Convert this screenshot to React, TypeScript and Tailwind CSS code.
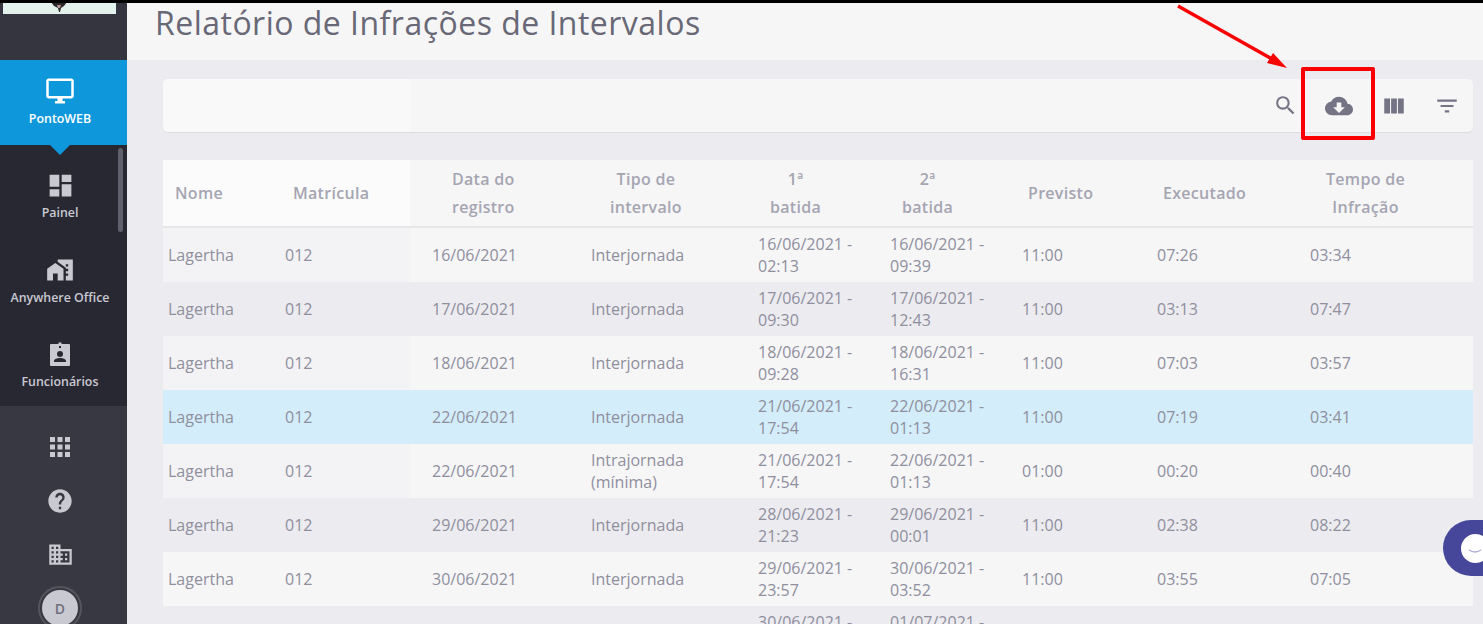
import { MdOutlineDesktopWindows, MdDashboard, MdHomeWork, MdApps, MdHelp, MdDomain, MdSearch, MdCloudDownload, MdViewColumn, MdFilterList } from "react-icons/md";

type Row = { d: string; t: string[]; a: string[]; b: string[]; p: string; e: string; i: string; bg: string; left: string };
const L = "bg-[#f6f6f7]";
const LL = "bg-[#f3f3f5]";
const D = "bg-[#ecebef]";
const H = "bg-[#d3edfa]";
const rows: Row[] = [
  { d: "16/06/2021", t: ["Interjornada"], a: ["16/06/2021 -", "02:13"], b: ["16/06/2021 -", "09:39"], p: "11:00", e: "07:26", i: "03:34", bg: L, left: LL },
  { d: "17/06/2021", t: ["Interjornada"], a: ["17/06/2021 -", "09:30"], b: ["17/06/2021 -", "12:43"], p: "11:00", e: "03:13", i: "07:47", bg: D, left: D },
  { d: "18/06/2021", t: ["Interjornada"], a: ["18/06/2021 -", "09:28"], b: ["18/06/2021 -", "16:31"], p: "11:00", e: "07:03", i: "03:57", bg: L, left: LL },
  { d: "22/06/2021", t: ["Interjornada"], a: ["21/06/2021 -", "17:54"], b: ["22/06/2021 -", "01:13"], p: "11:00", e: "07:19", i: "03:41", bg: H, left: H },
  { d: "22/06/2021", t: ["Intrajornada", "(mínima)"], a: ["21/06/2021 -", "17:54"], b: ["22/06/2021 -", "01:13"], p: "01:00", e: "00:20", i: "00:40", bg: L, left: LL },
  { d: "29/06/2021", t: ["Interjornada"], a: ["28/06/2021 -", "21:23"], b: ["29/06/2021 -", "00:01"], p: "11:00", e: "02:38", i: "08:22", bg: D, left: D },
  { d: "30/06/2021", t: ["Interjornada"], a: ["29/06/2021 -", "23:57"], b: ["30/06/2021 -", "03:52"], p: "11:00", e: "03:55", i: "07:05", bg: L, left: L },
  { d: "01/07/2021", t: ["Interjornada"], a: ["30/06/2021 -", "23:30"], b: ["01/07/2021 -", "05:10"], p: "11:00", e: "05:40", i: "05:20", bg: D, left: D },
];

const widths = ["w-[117px]", "w-[130px]", "w-[176px]", "w-[167px]", "w-[132px]", "w-[132px]", "w-[135px]", "w-[153px]", "w-[168px]"];

function Lines({ l }: { l: string[] }) {
  return <>{l.map((x) => <div key={x}>{x}</div>)}</>;
}

function Nav({ icon, label }: { icon: React.ReactNode; label: string }) {
  return (
    <div className="flex h-[84.5px] flex-col items-center pr-[7px] pt-[25px] text-[12.4px] font-semibold text-[#c9c9d2]">
      <div className="flex h-[30px] items-center justify-center">{icon}</div>
      <span className="mt-[5px] whitespace-nowrap leading-[16px]">{label}</span>
    </div>
  );
}

function Badge() {
  return (
    <svg width="22" height="26" viewBox="0 0 22 26" className="text-[#c9c9d2]">
      <path
        fillRule="evenodd"
        fill="currentColor"
        d="M2 3h7.5V1.5h3V3H20a1 1 0 0 1 1 1v20a1 1 0 0 1-1 1H2a1 1 0 0 1-1-1V4a1 1 0 0 1 1-1zM10 5v2h2V5zM11 10a3 3 0 1 0 0 6 3 3 0 0 0 0-6zM5 21h12v-1c0-2-3-3-6-3s-6 1-6 3z"
      />
    </svg>
  );
}

function Th({ l, pad, cls }: { l: string[]; pad: string; cls: string }) {
  return (
    <th className={`${pad} ${cls} pb-[2px] text-left align-middle font-semibold shadow-[inset_0_-2px_0_#e6e6e9]`}>
      <div className="inline-block text-center">
        <Lines l={l} />
      </div>
    </th>
  );
}

export default function App() {
  return (
    <div className="relative flex h-[624px] w-[1483px] overflow-hidden bg-[#ecebef] font-['Open_Sans',sans-serif]">
      <div className="absolute inset-x-0 top-0 z-20 h-[3px] bg-black" />

      <aside className="flex h-full w-[127px] shrink-0 flex-col bg-[#383842]">
        <div className="h-[60px] shrink-0 bg-[#35353f] px-[3px]">
          <div className="h-[14px] w-[113px] bg-[#e4f2ee] pl-[48px]">
            <svg width="16" height="14" viewBox="0 0 16 14">
              <path d="M0 2h16l-3 4-3 2-1 4H8L7 8 3 6z" fill="#2a2526" />
              <path d="M6 5h4l-1 3H7z" fill="#b99" />
            </svg>
          </div>
        </div>
        <div className="relative z-10 flex h-[85px] shrink-0 flex-col items-center bg-[#0f97db] pr-[7px] pt-[16px] text-[12.4px] font-semibold text-white">
          <div className="flex h-[30px] items-center justify-center"><MdOutlineDesktopWindows size={30} /></div>
          <span className="mt-[5px] leading-[16px]">PontoWEB</span>
          <div className="absolute left-[50px] top-full h-0 w-0 border-x-[10px] border-t-[10px] border-x-transparent border-t-[#0f97db]" />
        </div>
        <div className="relative h-[261px] shrink-0 bg-[#282832]">
          <div className="absolute right-[4px] top-[3px] h-[84px] w-[5px] rounded-full bg-[#5f5f6e]" />
          <Nav icon={<MdDashboard size={29} />} label="Painel" />
          <Nav icon={<MdHomeWork size={28} />} label="Anywhere Office" />
          <Nav icon={<Badge />} label="Funcionários" />
        </div>
        <div className="flex flex-col items-center pr-[7px] pt-[26px] text-[#c9c9d2]">
          <MdApps size={30} className="shrink-0" />
          <MdHelp size={28} className="mt-[25px] shrink-0" />
          <MdDomain size={27} className="mt-[26px] shrink-0" />
          <div className="mt-[18px] flex h-[44px] w-[44px] shrink-0 items-center justify-center rounded-full border-2 border-[#55555f]">
            <div className="flex h-[36px] w-[36px] items-center justify-center rounded-full bg-[#c9c9d2] text-[14px] font-semibold text-[#6f6f7d]">D</div>
          </div>
        </div>
      </aside>

      <main className="min-w-0 flex-1">
        <div className="h-[60px] bg-[#f6f6f6] pl-[28px] pt-[3px] text-[32px] leading-[40px] tracking-[0.48px] text-[#686876]">
          Relatório de Infrações de Intervalos
        </div>

        <div className="ml-[36px] mr-[10px] mt-[19px] flex h-[53px] items-center rounded-[5px] bg-[#f6f6f6] text-[#747484] shadow-[0_1px_1px_#dcdce0]">
          <div className="h-full w-[247px] rounded-l-[5px] bg-[#f9f9f9]" />
          <div className="flex flex-1 items-center justify-end">
            <MdSearch size={25} className="mr-[27px]" />
            <MdCloudDownload size={28} className="mr-[28px]" />
            <MdViewColumn size={26} className="mr-[27px]" />
            <MdFilterList size={26} className="mr-[13px]" />
          </div>
        </div>

        <table className="ml-[36px] mt-[28px] w-[1310px] table-fixed border-collapse text-[16px] leading-[22px] text-[#8f8f9e]">
          <colgroup>
            {widths.map((w, i) => <col key={i} className={w} />)}
          </colgroup>
          <thead className="leading-[28.5px] tracking-[0.3px] text-[#a5a5b2]">
            <tr className="h-[68px] bg-[#f6f6f7]">
              <Th l={["Nome"]} pad="pl-[12px]" cls="bg-[#fbfbfb]" />
              <Th l={["Matrícula"]} pad="pl-[13px]" cls="bg-[#fbfbfb]" />
              <Th l={["Data do", "registro"]} pad="pl-[42px]" cls="" />
              <Th l={["Tipo de", "intervalo"]} pad="pl-[24px]" cls="" />
              <Th l={["1ª", "batida"]} pad="pl-[17px]" cls="" />
              <Th l={["2ª", "batida"]} pad="pl-[17px]" cls="" />
              <Th l={["Previsto"]} pad="pl-[11px]" cls="" />
              <Th l={["Executado"]} pad="pl-[11px]" cls="" />
              <Th l={["Tempo de", "Infração"]} pad="pl-[21px]" cls="" />
            </tr>
          </thead>
          <tbody>
            {rows.map((r, i) => (
              <tr key={i} className={`h-[54px] ${r.bg}`}>
                <td className={`pl-[5px] ${r.left}`}>Lagertha</td>
                <td className={`pl-[5px] ${r.left}`}>012</td>
                <td className="pl-[22px]">{r.d}</td>
                <td className="pl-[5px]"><Lines l={r.t} /></td>
                <td className="pl-[5px]"><Lines l={r.a} /></td>
                <td className="pl-[5px]"><Lines l={r.b} /></td>
                <td className="pl-[5px]">{r.p}</td>
                <td className="pl-[5px]">{r.e}</td>
                <td className="pl-[5px]">{r.i}</td>
              </tr>
            ))}
          </tbody>
        </table>
      </main>

      {/* chat bubble */}
      <div className="absolute right-0 top-[520px] z-10 flex h-[56px] w-[40px] items-center rounded-l-[28px] bg-[#46469a] pl-[18px]">
        <div className="relative h-[29px] w-[29px] shrink-0 rounded-full bg-white">
          <svg className="absolute left-[6px] top-[14px]" width="16" height="8" viewBox="0 0 16 8"><path d="M2 2q6 4 12 0" fill="none" stroke="#a9a9d6" strokeWidth="1.3" /></svg>
        </div>
      </div>

      {/* red annotation */}
      <div className="absolute left-[1301px] top-[67px] z-10 h-[73px] w-[74px] rounded-[2px] border-[4px] border-[#fa0000]" />
      <svg className="absolute left-[1170px] top-0 z-10" width="130" height="75" viewBox="0 0 130 75">
        <path d="M8 6 102 59" stroke="#fa0000" strokeWidth="3.5" />
        <path d="M117 68 97 63 103 53z" fill="#fa0000" />
      </svg>
    </div>
  );
}
